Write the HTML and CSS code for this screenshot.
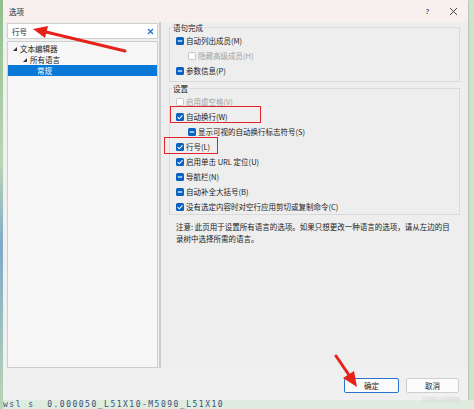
FILE: index.html
```html
<!DOCTYPE html>
<html lang="zh-CN">
<head>
  <meta charset="UTF-8">
  <title>选项</title>
  <link rel="stylesheet" href="styles.css">
</head>
<body>
  <div class="left-strip"></div>
  <div class="dialog">
    <div class="titlebar">
      <span class="title">选项</span>
      <span class="help">?</span>
      <svg class="close" width="9" height="9" viewBox="0 0 9 9"><path d="M1 1L8 8M8 1L1 8" stroke="#333" stroke-width="0.9"/></svg>
    </div>

    <div class="main">
      <div class="left">
        <div class="search">
          <span class="query">行号</span>
          <svg class="clear" width="7" height="7" viewBox="0 0 7 7"><path d="M1 1L6 6M6 1L1 6" stroke="#1f6fcf" stroke-width="1.2"/></svg>
        </div>
        <div class="tree">
          <div class="node lvl1"><span class="tri"></span>文本编辑器</div>
          <div class="node lvl2"><span class="tri"></span>所有语言</div>
          <div class="node lvl3 selected">常规</div>
        </div>
      </div>

      <div class="page">
        <fieldset class="group">
          <legend>语句完成</legend>
          <div class="opt"><span class="box on dash"></span>自动列出成员(M)</div>
          <div class="opt sub disabled"><span class="box"></span>隐藏高级成员(H)</div>
          <div class="opt"><span class="box on dash"></span>参数信息(P)</div>
        </fieldset>

        <fieldset class="group second">
          <legend>设置</legend>
          <div class="opt disabled"><span class="box"></span>启用虚空格(V)</div>
          <div class="opt"><span class="box on check"></span>自动换行(W)</div>
          <div class="opt sub"><span class="box on dash"></span>显示可视的自动换行标志符号(S)</div>
          <div class="opt"><span class="box on check"></span>行号(L)</div>
          <div class="opt"><span class="box on check"></span>启用单击 URL 定位(U)</div>
          <div class="opt"><span class="box on dash"></span>导航栏(N)</div>
          <div class="opt"><span class="box on dash"></span>自动补全大括号(B)</div>
          <div class="opt"><span class="box on check"></span>没有选定内容时对空行应用剪切或复制命令(C)</div>
        </fieldset>

        <p class="note">注意: 此页用于设置所有语言的选项。如果只想更改一种语言的选项，请从左边的目<br>录树中选择所需的语言。</p>
      </div>
    </div>

    <div class="footer">
      <button class="btn primary">确定</button>
      <button class="btn">取消</button>
    </div>
  </div>

  <div class="code-strip">wsl s&nbsp; 0.000050_L51X10-M5090_L51X10</div>
  <div class="watermark">CSDN @行球球</div>

  <!-- red annotations drawn over the screenshot -->
  <div class="mark mark-wrap"></div>
  <div class="mark mark-line"></div>
  <svg class="arrows" width="474" height="409" viewBox="0 0 474 409">
    <line x1="125" y1="51" x2="46" y2="32" stroke="#e5231b" stroke-width="3" stroke-linecap="round"/>
    <polygon points="33,29 48,26 45,38" fill="#e5231b"/>
    <line x1="336" y1="356" x2="349" y2="375" stroke="#e5231b" stroke-width="3" stroke-linecap="round"/>
    <polygon points="357,387 343,378 354,371" fill="#e5231b"/>
  </svg>
</body>
</html>
```

FILE: styles.css
```css
body {
  margin: 0;
  width: 474px;
  height: 409px;
  overflow: hidden;
  position: relative;
  background: #cfe2cc;
  font-family: "Noto Sans CJK SC", "Noto Sans", sans-serif;
  font-size: 7.5px;
  color: #1b1b1b;
}

.left-strip {
  position: absolute;
  left: 0;
  top: 0;
  width: 3px;
  height: 409px;
  background: linear-gradient(#8fbf8a, #b9d6b4 40%, #7fa8c9 60%, #b9d6b4);
}

.dialog {
  margin-left: 3px;
  width: 465px;
  height: 400px;
  background: #f0f0f0;
  display: flex;
  flex-direction: column;
  box-shadow: 1px 1px 0 #b9c4b8;
}

.titlebar {
  height: 22px;
  flex: none;
  background: #f8f0ee;
  display: flex;
  align-items: center;
  padding: 0 10px 0 6px;
}

.title {
  flex: 1;
  font-size: 7.5px;
}

.help {
  font-family: "Noto Sans", sans-serif;
  font-size: 7.5px;
  margin-right: 20px;
}

.main {
  height: 346px;
  display: flex;
}

.left {
  width: 151px;
  padding: 1px 0 0 4px;
  display: flex;
  flex-direction: column;
  gap: 2px;
}

.search {
  height: 16px;
  box-sizing: border-box;
  border: 1px solid #cfcfcf;
  background: #fff;
  display: flex;
  align-items: center;
  padding: 0 3px 0 4px;
}

.query {
  flex: 1;
}

.tree {
  flex: 1;
  background: #f6f6f6;
  border: 1px solid #cdcdcd;
  padding-top: 1px;
}

.node {
  height: 11px;
  line-height: 11px;
  display: flex;
  align-items: center;
}

.tri {
  width: 0;
  height: 0;
  border-left: 4px solid transparent;
  border-bottom: 4px solid #333;
  margin-right: 3px;
}

.lvl1 { padding-left: 5px; }
.lvl2 { padding-left: 15px; }
.lvl3 { padding-left: 29px; }

.node.selected {
  background: #0a78d7;
  color: #fff;
}

.page {
  flex: 1;
  margin-left: 1px;
  border-left: 2px solid #cbcbcb;
  background: #eeeeee;
  padding: 0 8px 0 8px;
}

.group {
  margin: 0;
  padding: 0 0 3px 0;
  border: 1px solid #dadada;
}

.group.second {
  margin-top: 1px;
  padding-bottom: 0;
}

.group legend {
  margin-left: 2px;
  padding: 0 1px;
  line-height: 11px;
}

.opt {
  height: 15px;
  display: flex;
  align-items: center;
  gap: 2px;
  padding-left: 6px;
}

.opt.sub {
  padding-left: 18px;
}

.opt.disabled {
  color: #a3a3a3;
}

.box {
  width: 8px;
  height: 8px;
  box-sizing: border-box;
  border: 1px solid #c6c6c6;
  border-radius: 1.5px;
  background: #fff;
  flex: none;
}

.box.on {
  border: none;
  background-color: #0762c2;
  background-repeat: no-repeat;
  background-position: center;
}

.box.check {
  background-image: url("data:image/svg+xml,%3Csvg xmlns='http://www.w3.org/2000/svg' width='8' height='8'%3E%3Cpath d='M1.6 4.1L3.3 5.8L6.5 2.3' fill='none' stroke='white' stroke-width='1.1'/%3E%3C/svg%3E");
}

.box.dash {
  background-image: url("data:image/svg+xml,%3Csvg xmlns='http://www.w3.org/2000/svg' width='8' height='8'%3E%3Cpath d='M1.8 4H6.2' fill='none' stroke='white' stroke-width='1.2'/%3E%3C/svg%3E");
}

.note {
  margin: 6px 0 0;
  padding-left: 7px;
  line-height: 12px;
}

.footer {
  flex: 1;
  display: flex;
  justify-content: flex-end;
  align-items: flex-start;
  gap: 7px;
  padding: 10px 9px 0 0;
}

.btn {
  width: 53px;
  height: 15px;
  padding: 0;
  font-family: inherit;
  font-size: 7.5px;
  color: #1b1b1b;
  background: #fbfbfb;
  border: 1px solid #cfcfcf;
  border-radius: 2px;
}

.btn.primary {
  width: 55px;
  border-color: #2a73c9;
}

.code-strip {
  height: 9px;
  line-height: 9px;
  overflow: hidden;
  padding-left: 3px;
  font-family: "DejaVu Sans Mono", monospace;
  font-size: 8px;
  letter-spacing: 1.5px;
  color: #3b4f7a;
  background: #dfece0;
}

.watermark {
  position: absolute;
  right: 14px;
  bottom: 5px;
  font-size: 5.5px;
  color: #f4f4f4;
  text-shadow: 0 0 1px #9aa;
}

.mark {
  position: absolute;
  border: 1.5px solid #e0242a;
  box-sizing: border-box;
}

.mark-wrap {
  left: 170px;
  top: 106px;
  width: 91px;
  height: 17px;
}

.mark-line {
  left: 164px;
  top: 137px;
  width: 54px;
  height: 17px;
}

.arrows {
  position: absolute;
  left: 0;
  top: 0;
  pointer-events: none;
}
```
